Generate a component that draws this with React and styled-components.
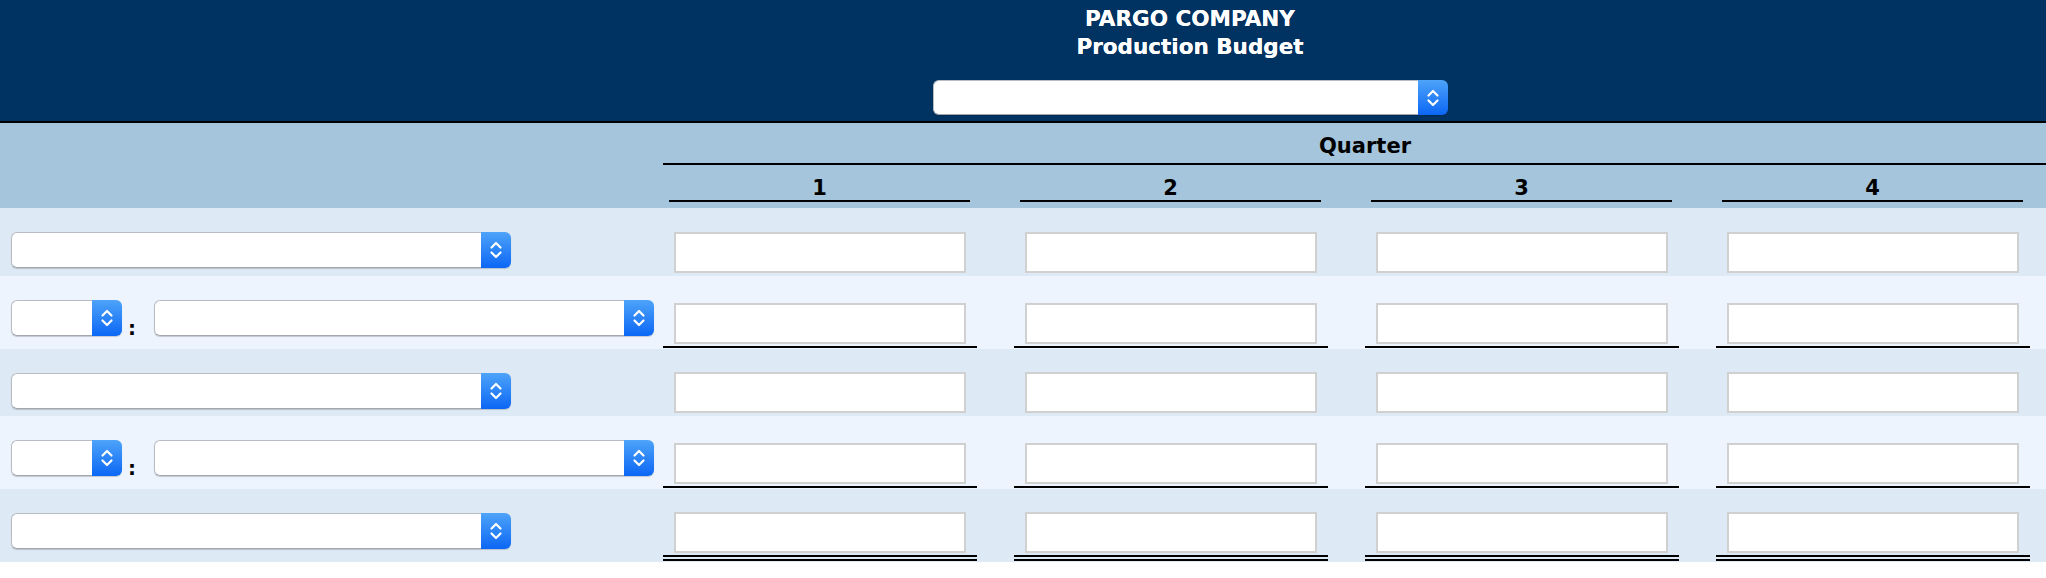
import React from 'react';
import styled, { createGlobalStyle } from 'styled-components';

const GlobalStyle = createGlobalStyle`
  html, body {
    margin: 0;
    padding: 0;
    overflow: hidden;
    background: #fff;
    font-family: "DejaVu Sans", Verdana, sans-serif;
  }
`;

const QUARTERS = [1, 2, 3, 4];

const ROWS = [
  { kind: 'single', top: 24, rule: 'none', shade: '#dee9f6' },
  { kind: 'pair', top: 27, rule: 'single', shade: '#edf4fd' },
  { kind: 'single', top: 23, rule: 'none', shade: '#dee9f6' },
  { kind: 'pair', top: 27, rule: 'single', shade: '#edf4fd' },
  { kind: 'single', top: 23, rule: 'double', shade: '#dee9f6' },
];

function Chevrons() {
  return (
    <svg width="14" height="22" viewBox="0 0 14 22" fill="none" stroke="#fff" strokeWidth="2.2" strokeLinecap="round" strokeLinejoin="round">
      <path d="M2.5 8.5 L7 4 L11.5 8.5" />
      <path d="M2.5 13.5 L7 18 L11.5 13.5" />
    </svg>
  );
}

function Picker({ width, height = 36 }) {
  return (
    <PickerBox $w={width} $h={height}>
      <PickerField />
      <Stepper>
        <Chevrons />
      </Stepper>
    </PickerBox>
  );
}

function BudgetRow({ row }) {
  return (
    <Row $shade={row.shade}>
      <LabelCell>
        {row.kind === 'pair' ? (
          <>
            <Picker width={111} />
            <Colon>:</Colon>
            <Picker width={500} />
          </>
        ) : (
          <Picker width={500} />
        )}
      </LabelCell>
      {QUARTERS.map((q) => (
        <ValueCell key={q} $top={row.top} $rule={row.rule}>
          <Field type="text" />
          {row.rule !== 'none' && <Rule $double={row.rule === 'double'} />}
        </ValueCell>
      ))}
    </Row>
  );
}

export default function App() {
  return (
    <Page>
      <GlobalStyle />
      <Header>
        <Title>
          PARGO COMPANY
          <br />
          Production Budget
        </Title>
        <HeaderPicker>
          <Picker width={515} height={35} />
        </HeaderPicker>
      </Header>
      <Band>
        <BandBlank />
        <QuarterCell>Quarter</QuarterCell>
        {QUARTERS.map((q) => (
          <ColHead key={q}>{q}</ColHead>
        ))}
      </Band>
      {ROWS.map((row, i) => (
        <BudgetRow key={i} row={row} />
      ))}
    </Page>
  );
}

const Page = styled.div`
  width: 2067px;
`;

const Header = styled.header`
  height: 121px;
  background: #013362;
  border-bottom: 2px solid #000;
  padding-left: 313px;
  display: flex;
  flex-direction: column;
  align-items: center;
`;

const Title = styled.h1`
  margin: 5px 0 0;
  font-size: 21.5px;
  line-height: 28px;
  font-weight: bold;
  color: #fff;
  text-align: center;
  text-shadow: 0 0 0.6px #fff;
`;

const HeaderPicker = styled.div`
  margin-top: 19px;
`;

const Band = styled.div`
  display: grid;
  grid-template-columns: 663px repeat(4, 351px);
  align-content: start;
  height: 85px;
  background: #a4c5dc;
  color: #000;
  font-weight: bold;
  font-size: 21px;
`;

const BandBlank = styled.div`
  grid-row: span 2;
`;

const QuarterCell = styled.div`
  grid-column: 2 / -1;
  padding: 11px 0 5px;
  line-height: 24px;
  text-align: center;
  border-bottom: 2px solid #000;
`;

const ColHead = styled.div`
  width: 301px;
  margin-left: 6px;
  padding: 12px 0 1px;
  line-height: 22px;
  text-align: center;
  border-bottom: 2px solid #000;
`;

const Row = styled.div`
  display: grid;
  grid-template-columns: 663px repeat(4, 351px);
  align-items: start;
  background: ${(p) => p.$shade};
`;

const LabelCell = styled.div`
  display: flex;
  align-items: flex-end;
  padding: 24px 0 0 11px;
`;

const Colon = styled.span`
  margin: 0 18px -2px 6px;
  font-size: 20px;
  font-weight: bold;
  line-height: 1;
  color: #000;
`;

const ValueCell = styled.div`
  width: 314px;
  padding-top: ${(p) => p.$top}px;
  padding-bottom: ${(p) => (p.$rule === 'none' ? 3 : 1)}px;
`;

const Field = styled.input`
  display: block;
  box-sizing: border-box;
  width: 292px;
  height: 41px;
  margin: 0 11px;
  padding: 0 6px;
  border: 2px solid #d0d0d0;
  border-radius: 0;
  background: #fff;
  outline: none;
  font-family: "DejaVu Sans", sans-serif;
  font-size: 16px;
`;

const Rule = styled.div`
  margin-top: 2px;
  height: ${(p) => (p.$double ? '2px' : '0')};
  border-top: 2px solid #000;
  border-bottom: ${(p) => (p.$double ? '2px solid #000' : 'none')};
`;

const PickerBox = styled.div`
  display: flex;
  width: ${(p) => p.$w}px;
  height: ${(p) => p.$h}px;
  border-radius: 6px;
  box-shadow: 0 1px 1px rgba(0, 0, 0, 0.18);
`;

const PickerField = styled.div`
  flex: 1;
  background: #fff;
  border: 1px solid #b8bcc3;
  border-right: none;
  border-bottom-color: #a2a6ad;
  border-radius: 6px 0 0 6px;
`;

const Stepper = styled.div`
  width: 30px;
  display: flex;
  align-items: center;
  justify-content: center;
  border-radius: 0 6px 6px 0;
  background: linear-gradient(#4ea3f9, #0b67f5);
`;
